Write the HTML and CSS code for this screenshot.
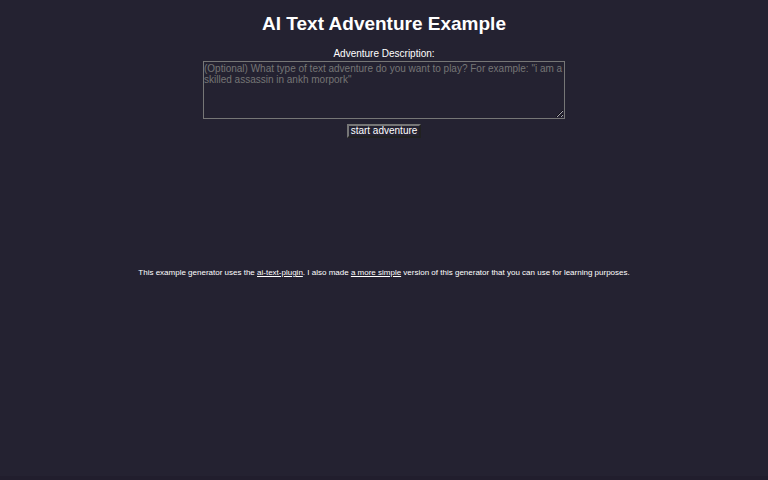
FILE: index.html
```html
<!DOCTYPE html>
<html lang="en">
<head>
    <meta charset="UTF-8">
    <meta name="viewport" content="width=device-width, initial-scale=1.0">
    <title>AI Text Adventure Example</title>
    <link rel="stylesheet" href="styles.css">
</head>
<body>
    <main class="content">
        <h1 class="title">AI Text Adventure Example</h1>

        <!-- Adventure setup -->
        <form class="adventure-form" id="adventureForm">
            <label for="description">Adventure Description:</label>
            <textarea class="description" id="description" placeholder="(Optional) What type of text adventure do you want to play? For example: &quot;i am a skilled assassin in ankh morpork&quot;"></textarea>
            <button class="start-button" type="button">start adventure</button>
        </form>

        <p class="credits">This example generator uses the <a href="#">ai-text-plugin</a>. I also made <a href="#">a more simple</a> version of this generator that you can use for learning purposes.</p>
    </main>
    <div class="bottom-bar"></div>
</body>
</html>
```

FILE: styles.css
```css
body {
    margin: 0;
    min-height: 100vh;
    display: flex;
    flex-direction: column;
    background-color: #242231;
    color: white;
    font-family: "Liberation Sans", Arial, sans-serif;
    font-size: 10px;
    line-height: 15px;
}

.content {
    flex: 1;
    padding: 13px 8px;
    text-align: center;
}

.title {
    margin: 0 0 11px;
    font-size: 19px;
    line-height: 22px;
}

.adventure-form {
    display: flex;
    flex-direction: column;
    align-items: center;
}

.description {
    box-sizing: border-box;
    width: 362px;
    max-width: 100%;
    height: 58px;
    margin: 0 0 5px;
    padding: 1px 0;
    border: 1px solid #767676;
    background-color: transparent;
    color: white;
    font: inherit;
    line-height: 11px;
}

.description::placeholder {
    color: #757575;
}

.start-button {
    padding: 0 2px;
    border: 2px outset #767676;
    background-color: #242231;
    color: white;
    font: inherit;
    line-height: 10px;
}

.credits {
    margin: 127px 0 0;
    font-size: 8px;
    line-height: 16px;
}

.credits a {
    color: inherit;
}

/* Thin strip along the bottom of the window */
.bottom-bar {
    height: 4px;
    background-color: #211e2d;
}
```
